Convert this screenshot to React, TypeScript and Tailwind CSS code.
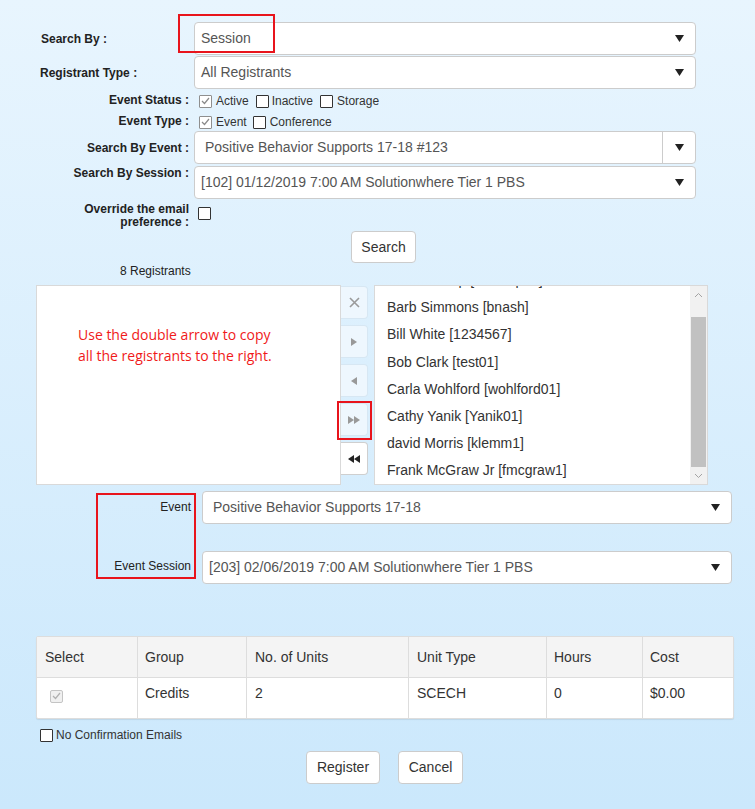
import React from "react";

function Tri() {
  return (
    <svg width="9" height="7" viewBox="0 0 9 7">
      <path d="M0 0 L9 0 L4.5 7 Z" fill="#222" />
    </svg>
  );
}

function Select({
  text,
  w,
  pl,
  divider,
}: {
  text: string;
  w: string;
  pl: string;
  divider?: boolean;
}) {
  return (
    <div
      className={`flex items-center h-[33px] bg-white border border-[#cccccc] rounded-[4px] ${w}`}
    >
      <span className={`flex-1 text-[14px] text-[#555] whitespace-nowrap ${pl}`}>{text}</span>
      {divider && <span className="self-stretch w-px bg-[#cccccc]" />}
      <span className="w-[32px] flex justify-center">
        <Tri />
      </span>
    </div>
  );
}

function Check({ checked, disabled }: { checked?: boolean; disabled?: boolean }) {
  return (
    <span
      className={
        disabled
          ? "inline-flex items-center justify-center w-[13px] h-[13px] border border-[#c4c4c4] bg-[#f0f0f0] rounded-[2px] shrink-0"
          : checked
          ? "inline-flex items-center justify-center w-[13px] h-[13px] border border-[#8f8f8f] bg-white rounded-[1px] shrink-0"
          : "inline-flex items-center justify-center w-[13px] h-[13px] border border-[#333] bg-white rounded-[1px] shrink-0"
      }
    >
      {checked && (
        <svg width="9" height="8" viewBox="0 0 9 8">
          <path
            d="M1 4 L3.5 6.5 L8 1"
            fill="none"
            stroke={disabled ? "#b0b0b0" : "#8a8a8a"}
            strokeWidth="1.2"
          />
        </svg>
      )}
    </span>
  );
}

const registrants = [
  "Anna Bishop [abishop01]",
  "Barb Simmons [bnash]",
  "Bill White [1234567]",
  "Bob Clark [test01]",
  "Carla Wohlford [wohlford01]",
  "Cathy Yanik [Yanik01]",
  "david Morris [klemm1]",
  "Frank McGraw Jr [fmcgraw1]",
];

export default function App() {
  return (
    <div
      className="w-[755px] min-h-[809px] pt-[22px] bg-gradient-to-b from-[#e8f5fe] to-[#cbe8fc] text-[#222]"
      style={{ fontFamily: '"Liberation Sans", Arial, sans-serif' }}
    >
      {/* Search By */}
      <div className="flex items-center h-[33px]">
        <div className="w-[194px] pl-[41px] text-[12px] font-bold">Search By :</div>
        <div className="relative">
          <Select text="Session" w="w-[502px]" pl="pl-[6px]" />
          <div className="absolute left-[-16px] top-[-8px] w-[97px] h-[39px] border-2 border-[#e8141c]" />
        </div>
      </div>
      {/* Registrant Type */}
      <div className="flex items-center h-[33px] mt-[1px]">
        <div className="w-[194px] pl-[40px] text-[12px] font-bold">Registrant Type :</div>
        <Select text="All Registrants" w="w-[502px]" pl="pl-[6px]" />
      </div>
      {/* Event Status */}
      <div className="flex items-center h-[21px]">
        <div className="w-[189px] text-right text-[12px] font-bold">Event Status :</div>
        <div className="flex items-center pl-[10px] pt-[3px] text-[12px] text-[#333]">
          <Check checked />
          <span className="ml-[4px] mr-[7px]">Active</span>
          <Check />
          <span className="ml-[3px] mr-[7px]">Inactive</span>
          <Check />
          <span className="ml-[4px]">Storage</span>
        </div>
      </div>
      {/* Event Type */}
      <div className="flex items-center h-[21px]">
        <div className="w-[189px] text-right text-[12px] font-bold">Event Type :</div>
        <div className="flex items-center pl-[10px] pt-[3px] text-[12px] text-[#333]">
          <Check checked />
          <span className="ml-[4px] mr-[6px]">Event</span>
          <Check />
          <span className="ml-[4px]">Conference</span>
        </div>
      </div>
      {/* Search By Event */}
      <div className="flex items-center h-[33px]">
        <div className="w-[194px] pr-[5px] text-right text-[12px] font-bold">Search By Event :</div>
        <Select text="Positive Behavior Supports 17-18 #123" w="w-[502px]" pl="pl-[10px]" divider />
      </div>
      {/* Search By Session */}
      <div className="flex items-start h-[33px] mt-[2px]">
        <div className="w-[194px] pr-[5px] text-right text-[12px] font-bold leading-[14px]">
          Search By Session :
        </div>
        <Select
          text="[102] 01/12/2019 7:00 AM Solutionwhere Tier 1 PBS"
          w="w-[502px]"
          pl="pl-[6px]"
        />
      </div>
      {/* Override */}
      <div className="flex items-start mt-[4px] h-[26px]">
        <div className="w-[189px] text-right text-[12px] font-bold leading-[13px]">
          Override the email
          <br />
          preference :
        </div>
        <div className="pl-[9px] pt-[4px] flex">
          <Check />
        </div>
      </div>
      {/* Search button */}
      <div className="flex mt-[2px] pl-[351px]">
        <button className="w-[65px] h-[32px] bg-white border border-[#cccccc] rounded-[4px] text-[14px] text-[#333]">
          Search
        </button>
      </div>
      <div className="pl-[120px] mt-[1px] text-[12px] leading-[14px] text-[#222]">8 Registrants</div>
      {/* Lists */}
      <div className="flex mt-[7px] pl-[36px]">
        <div className="w-[305px] h-[200px] bg-white border border-[#d9d9d9] pt-[38px] pl-[41px]">
          <p
            className="text-[14px] leading-[21px] text-[#f01a1a]"
            style={{ fontFamily: '"Open Sans", sans-serif' }}
          >
            Use the double arrow to copy
            <br />
            all the registrants to the right.
          </p>
        </div>
        <div className="w-[27px] flex flex-col gap-[6px] pt-[1px]">
          <div className="h-[33px] bg-[#eef7fe] border border-[#d7e7f3] border-l-0 rounded-r-[4px] flex items-center justify-center">
            <svg width="11" height="11" viewBox="0 0 11 11">
              <path d="M1 1 L10 10 M10 1 L1 10" stroke="#9a9a9a" strokeWidth="1.6" />
            </svg>
          </div>
          <div className="h-[33px] bg-[#eef7fe] border border-[#d7e7f3] border-l-0 rounded-r-[4px] flex items-center justify-center">
            <svg width="6" height="8" viewBox="0 0 6 8">
              <path d="M0 0 L6 4 L0 8 Z" fill="#999" />
            </svg>
          </div>
          <div className="h-[33px] bg-[#eef7fe] border border-[#d7e7f3] border-l-0 rounded-r-[4px] flex items-center justify-center">
            <svg width="6" height="8" viewBox="0 0 6 8">
              <path d="M6 0 L0 4 L6 8 Z" fill="#999" />
            </svg>
          </div>
          <div className="relative h-[33px] bg-[#eef7fe] border border-[#d7e7f3] border-l-0 rounded-r-[4px] flex items-center justify-center">
            <svg width="12" height="8" viewBox="0 0 12 8">
              <path d="M0 0 L6 4 L0 8 Z M6 0 L12 4 L6 8 Z" fill="#999" />
            </svg>
            <div className="absolute left-[-4px] top-[-3px] w-[35px] h-[39px] border-2 border-[#e8141c]" />
          </div>
          <div className="h-[33px] bg-white border border-[#cfcfcf] border-l-0 rounded-r-[4px] flex items-center justify-center">
            <svg width="12" height="8" viewBox="0 0 12 8">
              <path d="M6 0 L0 4 L6 8 Z M12 0 L6 4 L12 8 Z" fill="#222" />
            </svg>
          </div>
        </div>
        <div className="ml-[6px] w-[334px] h-[200px] bg-white border border-[#d9d9d9] flex overflow-hidden">
          <div className="flex-1 overflow-hidden">
            <div className="mt-[-19px] pl-[12px]">
              {registrants.map((r) => (
                <div key={r} className="h-[27.2px] flex items-center text-[14px] text-[#333] whitespace-nowrap">
                  {r}
                </div>
              ))}
            </div>
          </div>
          <div className="w-[17px] bg-[#f1f1f1] flex flex-col">
            <div className="h-[17px] flex items-center justify-center">
              <svg width="9" height="6" viewBox="0 0 9 6">
                <path d="M1 5 L4.5 1.5 L8 5" fill="none" stroke="#a3a3a3" strokeWidth="1" />
              </svg>
            </div>
            <div className="mt-[14px] mx-[1px] h-[150px] bg-[#c1c1c1]" />
            <div className="flex-1" />
            <div className="h-[17px] flex items-center justify-center">
              <svg width="9" height="6" viewBox="0 0 9 6">
                <path d="M1 1 L4.5 4.5 L8 1" fill="none" stroke="#a3a3a3" strokeWidth="1" />
              </svg>
            </div>
          </div>
        </div>
      </div>
      {/* Event / Session */}
      <div className="relative mt-[6px] pl-[36px]">
        <div className="flex items-center">
          <div className="w-[155px] text-right text-[12px] text-[#222] pb-[2px]">Event</div>
          <div className="ml-[11px]">
            <Select text="Positive Behavior Supports 17-18" w="w-[530px]" pl="pl-[10px]" />
          </div>
        </div>
        <div className="flex items-center mt-[27px]">
          <div className="w-[155px] text-right text-[12px] text-[#222] pb-[3px]">Event Session</div>
          <div className="ml-[11px]">
            <Select
              text="[203] 02/06/2019 7:00 AM Solutionwhere Tier 1 PBS"
              w="w-[530px]"
              pl="pl-[6px]"
            />
          </div>
        </div>
        <div className="absolute left-[96px] top-[2px] w-[100px] h-[86px] border-2 border-[#e8141c]" />
      </div>
      {/* Table */}
      <div className="mt-[52px] pl-[36px]">
        <div className="w-[698px] border border-[#dddddd] rounded-[2px] bg-white text-[14px] text-[#333] shadow-[0_1px_1px_rgba(0,0,0,0.08)]">
          <div className="grid grid-cols-[100px_109px_162px_138px_96px_92px] h-[41px] bg-[#f4f4f4] border-b border-[#dddddd]">
            <div className="flex items-center pl-[8px]">Select</div>
            <div className="flex items-center pl-[7px] border-l border-[#dddddd]">Group</div>
            <div className="flex items-center pl-[8px] border-l border-[#dddddd]">No. of Units</div>
            <div className="flex items-center pl-[8px] border-l border-[#dddddd]">Unit Type</div>
            <div className="flex items-center pl-[7px] border-l border-[#dddddd]">Hours</div>
            <div className="flex items-center pl-[7px] border-l border-[#dddddd]">Cost</div>
          </div>
          <div className="grid grid-cols-[100px_109px_162px_138px_96px_92px] h-[40px]">
            <div className="pl-[13px] pt-[7px]">
              <Check checked disabled />
            </div>
            <div className="pl-[7px] pt-[5px] border-l border-[#dddddd]">Credits</div>
            <div className="pl-[8px] pt-[5px] border-l border-[#dddddd]">2</div>
            <div className="pl-[8px] pt-[5px] border-l border-[#dddddd]">SCECH</div>
            <div className="pl-[7px] pt-[5px] border-l border-[#dddddd]">0</div>
            <div className="pl-[7px] pt-[5px] border-l border-[#dddddd]">$0.00</div>
          </div>
        </div>
      </div>
      {/* No confirmation */}
      <div className="flex items-center mt-[7px] pl-[40px] text-[12px] text-[#333]">
        <Check />
        <span className="ml-[3px]">No Confirmation Emails</span>
      </div>
      {/* Buttons */}
      <div className="flex gap-[18px] pl-[306px] mt-[7px]">
        <button className="w-[74px] h-[33px] bg-white border border-[#cccccc] rounded-[4px] text-[14px] text-[#333]">
          Register
        </button>
        <button className="w-[65px] h-[33px] bg-white border border-[#cccccc] rounded-[4px] text-[14px] text-[#333]">
          Cancel
        </button>
      </div>
    </div>
  );
}
